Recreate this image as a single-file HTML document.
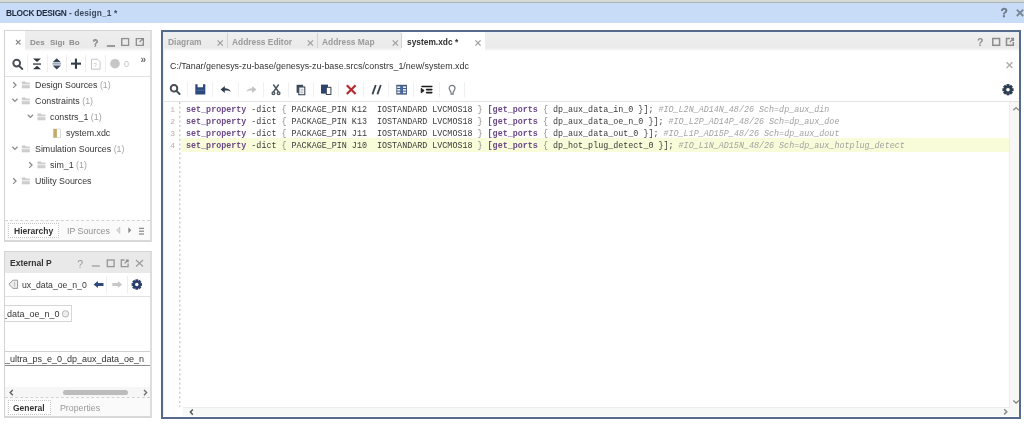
<!DOCTYPE html>
<html><head><meta charset="utf-8"><style>
*{margin:0;padding:0;box-sizing:border-box}
html,body{width:1024px;height:424px;overflow:hidden;background:#fff;font-family:"Liberation Sans",sans-serif}
body{position:relative;-webkit-font-smoothing:antialiased}
.t,.code,.ln,svg{will-change:transform}
.a{position:absolute}
.t{position:absolute;white-space:pre;line-height:12px;height:12px}
.b{font-weight:bold}
svg{position:absolute;overflow:visible}
.code{position:absolute;left:186px;font-family:"Liberation Mono",monospace;font-size:8.4px;line-height:12.1px;white-space:pre;color:#3a3a3a}
.kw{color:#6c4a88;font-weight:bold}
.cm{color:#a2a2a2;font-style:italic}
.br{color:#8a8a8a}
.ln{position:absolute;left:169px;width:6px;font-family:"Liberation Mono",monospace;font-size:8px;color:#b0b0b0;line-height:12.1px;text-align:right}
</style></head><body>

<!-- top strip + title bar -->
<div class="a" style="left:0;top:0;width:1024px;height:3px;background:#d7dbd8"></div>
<div class="a" style="left:0;top:2px;width:1024px;height:1px;background:#aab4b6"></div>
<div class="a" style="left:0;top:3px;width:1024px;height:20px;background:#c8dbf7"></div>
<div class="t b" style="left:6px;top:7px;font-size:8.4px;color:#1e2b3b;letter-spacing:-0.3px">BLOCK DESIGN<span style="color:#3b4b5e;letter-spacing:0.1px"> - design_1 *</span></div>
<svg class="a" style="left:0;top:0" width="1024" height="30"><text x="1000.6" y="17.2" font-family="Liberation Sans" font-weight="bold" font-size="12" fill="#6a7888" stroke="#6a7888" stroke-width="0.3">?</text><g stroke="#7a8794" stroke-width="1.8"><line x1="1016.8" y1="9.6" x2="1023.2" y2="16"/><line x1="1023.2" y1="9.6" x2="1016.8" y2="16"/></g></svg>

<!-- ============ LEFT TOP PANEL ============ -->
<div class="a" style="left:4px;top:30px;width:148px;height:212px;border:1px solid #d4d4d4;border-bottom:2px solid #d8d8d8;border-right:2px solid #dcdddc;background:#fff"></div>
<div class="a" style="left:5px;top:31px;width:145px;height:20px;background:linear-gradient(#eeeeee 0,#eaeaea 17px,#f4f4f4 18px,#fafafa 20px)"></div>
<div class="a" style="left:5px;top:31px;width:20px;height:20px;background:#fff"></div>
<div class="t b" style="left:30px;top:37px;font-size:8px;color:#8e8e8e">Des</div>
<div class="t b" style="left:50px;top:37px;font-size:8px;color:#8e8e8e">Sigı</div>
<div class="t b" style="left:69px;top:37px;font-size:8px;color:#8e8e8e">Bo</div>
<div class="t b" style="left:93px;top:37px;font-size:9px;color:#8a8a8a">?</div>
<div class="a" style="left:107px;top:45px;width:8px;height:2px;background:#9a9a9a"></div>
<div class="a" style="left:121px;top:38px;width:8px;height:8px;border:1.5px solid #8a8a8a"></div>
<div class="a" style="left:136px;top:38px;width:8px;height:8px;border:1.5px solid #8a8a8a"></div>

<!-- toolbar left -->
<div class="a" style="left:5px;top:76px;width:145px;height:1px;background:#e2e2e2"></div>

<!-- tree -->
<div class="t" style="left:35px;top:79px;font-size:8.85px;color:#363636">Design Sources <span style="color:#a4a4a4">(1)</span></div>
<div class="t" style="left:35px;top:95px;font-size:8.85px;color:#363636">Constraints <span style="color:#a4a4a4">(1)</span></div>
<div class="t" style="left:50px;top:111px;font-size:8.85px;color:#363636">constrs_1 <span style="color:#a4a4a4">(1)</span></div>
<div class="t" style="left:66px;top:127px;font-size:8.85px;color:#363636">system.xdc</div>
<div class="t" style="left:35px;top:143px;font-size:8.85px;color:#363636">Simulation Sources <span style="color:#a4a4a4">(1)</span></div>
<div class="t" style="left:50px;top:159px;font-size:8.85px;color:#363636">sim_1 <span style="color:#a4a4a4">(1)</span></div>
<div class="t" style="left:35px;top:175px;font-size:8.85px;color:#363636">Utility Sources</div>

<!-- bottom tabs -->
<div class="a" style="left:5px;top:220px;width:145px;height:0;border-top:1px dashed #d2d2d2"></div>
<div class="a" style="left:5px;top:221px;width:145px;height:19px;background:#fafafa"></div>
<div class="a" style="left:8px;top:223px;width:51px;height:15px;background:#fff;border:1px dotted #c4c4c4"></div>
<div class="t b" style="left:14px;top:225px;font-size:8.5px;color:#333">Hierarchy</div>
<div class="t" style="left:67px;top:225px;font-size:8.8px;color:#909090">IP Sources</div>

<!-- ============ LEFT BOTTOM PANEL ============ -->
<div class="a" style="left:4px;top:251px;width:148px;height:167px;border:1px solid #d4d4d4;border-bottom:2px solid #d8d8d8;border-right:2px solid #dcdddc;background:#fff"></div>
<div class="a" style="left:5px;top:252px;width:145px;height:21px;background:#e9e9e9"></div>
<div class="t b" style="left:10px;top:257px;font-size:8.5px;color:#333">External P</div>
<div class="a" style="left:5px;top:296px;width:145px;height:1px;background:#e2e2e2"></div>
<div class="t" style="left:22px;top:279px;font-size:8.7px;color:#363636">ux_data_oe_n_0</div>
<div class="a" style="left:5px;top:305px;width:67px;height:17px;border:1px solid #d6d6d6;border-left:none"></div>
<div class="a" style="left:5px;top:306px;width:56px;height:15px;overflow:hidden"><div class="t" style="left:-3.2px;top:2px;font-size:9px;color:#363636">_data_oe_n_0</div></div>
<div class="a" style="left:5px;top:351px;width:145px;height:1px;background:#d0d0d0"></div>
<div class="t" style="left:5px;top:353px;font-size:9px;color:#333">_ultra_ps_e_0_dp_aux_data_oe_n</div>
<div class="a" style="left:5px;top:365px;width:145px;height:1px;background:#8a8a8a"></div>
<div class="a" style="left:5px;top:387px;width:145px;height:10px;background:#f6f6f6"></div>
<div class="a" style="left:62.5px;top:389.8px;width:65.5px;height:5px;background:#bcbcbc;border-radius:2.5px"></div>
<div class="a" style="left:5px;top:397px;width:145px;height:0;border-top:1px dashed #d2d2d2"></div>
<div class="a" style="left:5px;top:398px;width:145px;height:18px;background:#fafafa"></div>
<div class="a" style="left:8px;top:400px;width:43px;height:15px;background:#fff;border:1px dotted #c4c4c4"></div>
<div class="t b" style="left:13px;top:402px;font-size:8.5px;color:#333">General</div>
<div class="t" style="left:60px;top:402px;font-size:8.8px;color:#999">Properties</div>

<!-- ============ MAIN PANEL ============ -->
<div class="a" style="left:161px;top:30px;width:860px;height:389px;border:2px solid #566b8c;background:#fff"></div>
<div class="a" style="left:163px;top:32px;width:856px;height:19px;background:linear-gradient(#e6eef8 0,#e6eef8 1px,#efefef 1px,#eaeaea 16px,#f3f3f3 17px,#fafafa 19px)"></div>
<div class="a" style="left:401px;top:32px;width:84px;height:19px;background:#fff"></div>
<div class="a" style="left:227px;top:33px;width:1px;height:15px;background:#d2d2d2"></div>
<div class="a" style="left:317px;top:33px;width:1px;height:15px;background:#d2d2d2"></div>
<div class="a" style="left:401px;top:33px;width:1px;height:15px;background:#d2d2d2"></div>
<div class="t b" style="left:168px;top:36px;font-size:8.4px;color:#9a9a9a">Diagram</div>
<div class="t b" style="left:232px;top:36px;font-size:8.4px;color:#9a9a9a">Address Editor</div>
<div class="t b" style="left:322px;top:36px;font-size:8.4px;color:#9a9a9a">Address Map</div>
<div class="t b" style="left:407px;top:36px;font-size:8.4px;color:#2e2e2e">system.xdc *</div>

<div class="t" style="left:170px;top:60px;font-size:8.9px;color:#333">C:/Tanar/genesys-zu-base/genesys-zu-base.srcs/constrs_1/new/system.xdc</div>

<div class="a" style="left:163px;top:101px;width:856px;height:1px;background:#e4e4e4"></div>
<!-- gutter -->
<svg class="a" style="left:0;top:0" width="1024" height="424"><line x1="179.8" y1="102" x2="179.8" y2="407" stroke="#b4b4b4" stroke-width="1" stroke-dasharray="2 2.6"/><line x1="163.5" y1="33" x2="163.5" y2="416" stroke="#e6f0f8" stroke-width="1"/></svg>
<!-- current line -->
<div class="a" style="left:181px;top:138px;width:828px;height:14px;background:#f9fcd8"></div>
<div class="ln" style="top:104.3px">1<br>2<br>3<br>4</div>
<div class="code" style="top:104.3px"><span class="kw">set_property</span> -dict <span class="br">{</span> PACKAGE_PIN K12  IOSTANDARD LVCMOS18 <span class="br">}</span> <span class="kw">[get_ports</span> <span class="br">{</span> dp_aux_data_in_0 }]; <span class="cm">#IO_L2N_AD14N_48/26 Sch=dp_aux_din</span>
<span class="kw">set_property</span> -dict <span class="br">{</span> PACKAGE_PIN K13  IOSTANDARD LVCMOS18 <span class="br">}</span> <span class="kw">[get_ports</span> <span class="br">{</span> dp_aux_data_oe_n_0 }]; <span class="cm">#IO_L2P_AD14P_48/26 Sch=dp_aux_doe</span>
<span class="kw">set_property</span> -dict <span class="br">{</span> PACKAGE_PIN J11  IOSTANDARD LVCMOS18 <span class="br">}</span> <span class="kw">[get_ports</span> <span class="br">{</span> dp_aux_data_out_0 }]; <span class="cm">#IO_L1P_AD15P_48/26 Sch=dp_aux_dout</span>
<span class="kw">set_property</span> -dict <span class="br">{</span> PACKAGE_PIN J10  IOSTANDARD LVCMOS18 <span class="br">}</span> <span class="kw">[get_ports</span> <span class="br">{</span> dp_hot_plug_detect_0 }]; <span class="cm">#IO_L1N_AD15N_48/26 Sch=dp_aux_hotplug_detect</span></div>

<!-- scrollbars -->
<div class="a" style="left:1009px;top:102px;width:10px;height:314px;background:#f7f7f3;border-left:1px solid #eeeeea"></div>
<div class="a" style="left:183px;top:407px;width:827px;height:9px;background:#f6f8f8;border-top:1px solid #ececec"></div>


<!-- ===== MAIN TOOLBAR ICONS ===== -->
<svg class="a" style="left:0;top:0" width="1024" height="424" viewBox="0 0 1024 424">
 <g stroke="#f0f0f0" stroke-width="1">
  <line x1="187.5" y1="82" x2="187.5" y2="97"/><line x1="212.5" y1="82" x2="212.5" y2="97"/>
  <line x1="238.5" y1="82" x2="238.5" y2="97"/><line x1="263.5" y1="82" x2="263.5" y2="97"/>
  <line x1="288.5" y1="82" x2="288.5" y2="97"/><line x1="313.5" y1="82" x2="313.5" y2="97"/>
  <line x1="338.5" y1="82" x2="338.5" y2="97"/><line x1="363.5" y1="82" x2="363.5" y2="97"/>
  <line x1="388.5" y1="82" x2="388.5" y2="97"/><line x1="413.5" y1="82" x2="413.5" y2="97"/>
  <line x1="439.5" y1="82" x2="439.5" y2="97"/><line x1="464.5" y1="82" x2="464.5" y2="97"/>
 </g>
 <!-- search -->
 <circle cx="174" cy="88.3" r="3.3" fill="none" stroke="#464c54" stroke-width="1.9"/>
 <line x1="176.6" y1="91" x2="179.6" y2="94" stroke="#464c54" stroke-width="1.9" stroke-linecap="round"/>
 <!-- save -->
 <path d="M195.3 84.3h2.3v3h5.4v-3h2.3v10.3h-10z" fill="#2c4a7e"/>
 <line x1="196.5" y1="90.2" x2="204" y2="90.2" stroke="#5d77a3" stroke-width="0.8"/>
 <!-- undo -->
 <path d="M220.6 89.6l4.2-3.6v2.2c3 0 5.2 1.2 6 3.6c-1.4-1-3.4-1.3-6-1.2v2.3z" fill="#2f3d4a"/>
 <!-- redo gray -->
 <path d="M256.4 89.6l-4.2-3.6v2.2c-3 0-5.2 1.2-6 3.6c1.4-1 3.4-1.3 6-1.2v2.3z" fill="#c4c4c4"/>
 <!-- scissors -->
 <g stroke="#4a5560" stroke-width="1.4" fill="none">
  <line x1="273.3" y1="84.5" x2="278.6" y2="92"/><line x1="278.7" y1="84.5" x2="273.4" y2="92"/>
  <circle cx="273.4" cy="93.2" r="1.3"/><circle cx="278.6" cy="93.2" r="1.3"/>
 </g>
 <!-- copy -->
 <rect x="296.6" y="84.8" width="6.5" height="8" fill="#3a4856"/>
 <rect x="298.8" y="87" width="6" height="7.7" fill="#fff" stroke="#3a4856" stroke-width="1.1"/>
 <g stroke="#8a96a2" stroke-width="0.7"><line x1="300.3" y1="89.3" x2="303.5" y2="89.3"/><line x1="300.3" y1="91" x2="303.5" y2="91"/><line x1="300.3" y1="92.7" x2="303.5" y2="92.7"/></g>
 <!-- paste -->
 <rect x="321" y="84.6" width="7" height="9" fill="#2c4570"/>
 <rect x="326.3" y="87.3" width="4.6" height="7.2" fill="#fff" stroke="#3a4450" stroke-width="1"/>
 <!-- red X -->
 <g stroke="#b52a30" stroke-width="2.2"><line x1="346.8" y1="85.2" x2="355.6" y2="94"/><line x1="355.6" y1="85.2" x2="346.8" y2="94"/></g>
 <!-- // -->
 <g stroke="#38424e" stroke-width="1.8"><line x1="375.8" y1="85" x2="372.4" y2="94.4"/><line x1="380.8" y1="85" x2="377.4" y2="94.4"/></g>
 <!-- table -->
 <rect x="396.3" y="84.8" width="10.7" height="9.8" fill="#44587c"/>
 <g fill="#e8eef8"><rect x="397.2" y="86.4" width="3.2" height="1.6"/><rect x="397.2" y="89" width="3.2" height="1.6"/><rect x="397.2" y="91.6" width="3.2" height="1.6"/>
 <rect x="402.9" y="86.4" width="3.2" height="1.6"/><rect x="402.9" y="89" width="3.2" height="1.6"/><rect x="402.9" y="91.6" width="3.2" height="1.6"/></g>
 <rect x="400.5" y="86" width="2.3" height="7.8" fill="#4068aa"/>
 <!-- indent -->
 <g stroke="#1c1c1c" stroke-width="1.6" stroke-linecap="round"><line x1="422" y1="86.5" x2="431.8" y2="86.5"/><line x1="426.6" y1="89.6" x2="431.8" y2="89.6"/><line x1="426.6" y1="92.6" x2="431.8" y2="92.6"/></g>
 <path d="M421.2 88.3l3 2.3l-3 2.3z" fill="#1c1c1c" stroke="#1c1c1c" stroke-width="0.8" stroke-linejoin="round"/>
 <!-- bulb -->
 <path d="M449.2 88.2a2.9 2.9 0 1 1 5.8 0c0 1.6-1.3 2.8-1.9 4.4v1.6h-2v-1.6c-0.6-1.6-1.9-2.8-1.9-4.4z" fill="none" stroke="#737c84" stroke-width="1.2"/>
 <!-- gear main -->
 <g transform="translate(1008 89.7)" fill="#2d3e52">
  <circle r="4.1"/>
  <g><rect x="-1.5" y="-5.6" width="3" height="11.2"/><rect x="-5.6" y="-1.5" width="11.2" height="3"/>
  <rect x="-1.5" y="-5.6" width="3" height="11.2" transform="rotate(45)"/><rect x="-5.6" y="-1.5" width="11.2" height="3" transform="rotate(45)"/></g>
  <circle r="1.8" fill="#fff"/>
 </g>
 <!-- main close x path row -->
 <g stroke="#ababab" stroke-width="1.3"><line x1="1006.6" y1="62.2" x2="1012.4" y2="68"/><line x1="1012.4" y1="62.2" x2="1006.6" y2="68"/></g>
 <!-- main header icons -->
 <text x="977" y="46.2" font-family="Liberation Sans" font-weight="bold" font-size="10.5" fill="#8e8e8e">?</text>
 <rect x="992.8" y="38.5" width="6.8" height="6.8" fill="none" stroke="#8c8c8c" stroke-width="1.5"/>
 <path d="M1010 38.5h-3.5v6.8h6.8v-3.4" fill="none" stroke="#8c8c8c" stroke-width="1.5"/>
 <path d="M1009.8 42.2l3.6-3.6M1011 38.5h2.4v2.4" fill="none" stroke="#8c8c8c" stroke-width="1.3"/>
 <!-- tab close x's -->
 <g stroke="#a0a0a0" stroke-width="1.3">
  <line x1="217.6" y1="40.4" x2="222.8" y2="45.6"/><line x1="222.8" y1="40.4" x2="217.6" y2="45.6"/>
  <line x1="307.8" y1="40.4" x2="313" y2="45.6"/><line x1="313" y1="40.4" x2="307.8" y2="45.6"/>
  <line x1="392.8" y1="40.4" x2="398" y2="45.6"/><line x1="398" y1="40.4" x2="392.8" y2="45.6"/>
  <line x1="475.4" y1="40.4" x2="480.6" y2="45.6"/><line x1="480.6" y1="40.4" x2="475.4" y2="45.6"/>
 </g>
 <!-- scroll arrows -->
 <path d="M1013.3 110.2l2.8-2.6l2.8 2.6" fill="none" stroke="#8a8a8a" stroke-width="1.4"/>
 <path d="M1013.3 400.5l2.8 2.6l2.8-2.6" fill="none" stroke="#8a8a8a" stroke-width="1.4"/>
 <path d="M192.8 409.5l-2.4 2.6l2.4 2.6" fill="none" stroke="#555" stroke-width="1.5"/>
 <path d="M1004.2 409.2l2.6 2.6l-2.6 2.6" fill="none" stroke="#8a8a8a" stroke-width="1.5"/>
</svg>

<!-- ===== LEFT PANEL ICONS ===== -->
<svg class="a" style="left:0;top:0" width="1024" height="424" viewBox="0 0 1024 424">
 <!-- top header icons -->
 <text x="92.3" y="46.5" font-family="Liberation Sans" font-size="10.5" fill="#8e8e8e">?</text>
 <line x1="106.8" y1="46" x2="114.8" y2="46" stroke="#999" stroke-width="1.3"/>
 <rect x="121.8" y="38.6" width="6.8" height="6.8" fill="none" stroke="#919191" stroke-width="1.3"/>
 <path d="M139.5 38.6h-3.2v6.8h6.8v-3.2" fill="none" stroke="#919191" stroke-width="1.3"/>
 <path d="M139.6 42l3.4-3.4M140.8 38.6h2.3v2.3" fill="none" stroke="#8c8c8c" stroke-width="1.2"/>
 <line x1="16" y1="40" x2="20.5" y2="44.5" stroke="#8c8c8c" stroke-width="1.1"/><line x1="20.5" y1="40" x2="16" y2="44.5" stroke="#8c8c8c" stroke-width="1.1"/>
 <!-- toolbar seps -->
 <g stroke="#eeeeee" stroke-width="1">
  <line x1="27.5" y1="55" x2="27.5" y2="72"/><line x1="47.5" y1="55" x2="47.5" y2="72"/>
  <line x1="66.5" y1="55" x2="66.5" y2="72"/><line x1="85.5" y1="55" x2="85.5" y2="72"/>
  <line x1="105.5" y1="55" x2="105.5" y2="72"/>
 </g>
 <!-- search -->
 <circle cx="16.7" cy="63.1" r="3.4" fill="none" stroke="#4a5058" stroke-width="1.9"/>
 <line x1="19.3" y1="66" x2="22.3" y2="69" stroke="#4a5058" stroke-width="1.9" stroke-linecap="round"/>
 <!-- collapse -->
 <path d="M33 58.5h8l-4 3.4z M33 69.2h8l-4-3.4z" fill="#303840"/>
 <rect x="33" y="63.4" width="8" height="1.3" fill="#303840"/>
 <!-- expand -->
 <path d="M52.6 62.2h8.3l-4.15-4z M52.6 65.4h8.3l-4.15 4z" fill="#38475c"/>
 <rect x="52.6" y="63.2" width="8.3" height="1.3" fill="#8090a8"/>
 <!-- plus -->
 <rect x="71" y="62.6" width="10" height="2.1" fill="#2f3e4e"/>
 <rect x="74.9" y="58.6" width="2.1" height="10.2" fill="#2f3e4e"/>
 <!-- doc ? -->
 <path d="M91.5 59.2h6l2.6 2.6v7.4h-8.6z" fill="none" stroke="#c4c4c4" stroke-width="1"/>
 <text x="93.6" y="66.6" font-family="Liberation Sans" font-size="6" fill="#c0c0c0">?</text>
 <!-- gray circle -->
 <circle cx="115" cy="63.7" r="4.8" fill="#c6c6c6"/>
 <text x="124" y="67.3" font-family="Liberation Sans" font-size="9" fill="#c4c4c4">0</text>
 <text x="140.6" y="62.5" font-family="Liberation Sans" font-weight="bold" font-size="10" fill="#6a6a6a">»</text>
 <!-- tree chevrons -->
 <g fill="none" stroke="#8a8a8a" stroke-width="1.3">
  <path d="M13.2 82.3l2.8 2.8l-2.8 2.8"/>
  <path d="M12.3 98.8l2.6 2.6l2.6-2.6"/>
  <path d="M27.8 114.8l2.6 2.6l2.6-2.6"/>
  <path d="M12.3 146.8l2.6 2.6l2.6-2.6"/>
  <path d="M29.2 162.3l2.8 2.8l-2.8 2.8"/>
  <path d="M13.2 178.3l2.8 2.8l-2.8 2.8"/>
 </g>
 <!-- folders -->
 <defs><linearGradient id="fg" x1="0" y1="0" x2="0" y2="1"><stop offset="0" stop-color="#c4c4c4"/><stop offset="0.3" stop-color="#d0d0d0"/><stop offset="0.45" stop-color="#ececec"/><stop offset="0.6" stop-color="#d4d4d4"/><stop offset="1" stop-color="#c8c8c8"/></linearGradient></defs>
 <path d="M21.8 81.6h3.2l0.8 1h4v5.6h-8z" fill="url(#fg)"/>
 <path d="M21.8 97.6h3.2l0.8 1h4v5.6h-8z" fill="url(#fg)"/>
 <path d="M37.4 113.6h3.2l0.8 1h4v5.6h-8z" fill="url(#fg)"/>
 <path d="M21.8 145.6h3.2l0.8 1h4v5.6h-8z" fill="url(#fg)"/>
 <path d="M37.4 161.6h3.2l0.8 1h4v5.6h-8z" fill="url(#fg)"/>
 <path d="M21.8 177.6h3.2l0.8 1h4v5.6h-8z" fill="url(#fg)"/>
 <!-- xdc file icon -->
 <rect x="53.5" y="129" width="7" height="8.6" fill="#fff" stroke="#d8d8d8" stroke-width="0.8"/>
 <rect x="53.5" y="129" width="3.4" height="8.6" fill="#c2aa6a"/>
 <!-- bottom tabs arrows -->
 <path d="M119.8 227.3l-3.2 3l3.2 3z" fill="#e0e0e0" stroke="#b0b0b0" stroke-width="0.6"/>
 <path d="M128.3 227.3l3 3l-3 3z" fill="#8a8a8a"/>
 <g stroke="#8e8e8e" stroke-width="1.3"><line x1="139" y1="228.4" x2="144" y2="228.4"/><line x1="139" y1="231.2" x2="144" y2="231.2"/><line x1="139" y1="234" x2="144" y2="234"/></g>

 <!-- ext panel header icons -->
 <text x="77.3" y="267.5" font-family="Liberation Sans" font-size="10.5" fill="#999">?</text>
 <line x1="91.8" y1="266" x2="99.8" y2="266" stroke="#a0a0a0" stroke-width="1.3"/>
 <rect x="107.3" y="260" width="6.8" height="6.6" fill="none" stroke="#969696" stroke-width="1.3"/>
 <path d="M124.5 260h-3.2v6.6h6.8v-3.2" fill="none" stroke="#969696" stroke-width="1.3"/>
 <path d="M124.6 263.4l3.4-3.4M125.8 260h2.3v2.3" fill="none" stroke="#8c8c8c" stroke-width="1.2"/>
 <g stroke="#9a9a9a" stroke-width="1.1"><line x1="136" y1="260" x2="143" y2="266.5"/><line x1="143" y1="260" x2="136" y2="266.5"/></g>
 <!-- port icon -->
 <path d="M13 280.2h4.6v8.2h-4.6l-4.2-4.1z" fill="#ececec" stroke="#9a9a9a" stroke-width="1"/>
 <line x1="14.6" y1="282" x2="14.6" y2="286.8" stroke="#b0b0b0" stroke-width="0.8"/>
 <!-- toolbar seps -->
 <g stroke="#eeeeee"><line x1="106.5" y1="276" x2="106.5" y2="293"/><line x1="127.5" y1="276" x2="127.5" y2="293"/></g>
 <!-- blue arrow left -->
 <path d="M93.6 284.5l4.3-3.6v2h5.6v3.2h-5.6v2z" fill="#2c4a80"/>
 <!-- gray arrow right -->
 <path d="M122.2 284.5l-4.3-3.6v2h-5.6v3.2h5.6v2z" fill="#c8c8c8"/>
 <!-- gear small -->
 <g transform="translate(136.8 284.5)" fill="#2c3f6c">
  <circle r="3.9"/>
  <rect x="-1.4" y="-5.2" width="2.8" height="10.4"/><rect x="-5.2" y="-1.4" width="10.4" height="2.8"/>
  <rect x="-1.4" y="-5.2" width="2.8" height="10.4" transform="rotate(45)"/><rect x="-5.2" y="-1.4" width="10.4" height="2.8" transform="rotate(45)"/>
  <circle r="1.7" fill="#fff"/>
 </g>
 <!-- clear icon in field -->
 <circle cx="65.5" cy="313.8" r="3.1" fill="#eeeeee" stroke="#bdbdbd" stroke-width="1.1"/>
 <!-- h scroll arrows -->
 <path d="M12.8 390l-2.6 2.6l2.6 2.6" fill="none" stroke="#606060" stroke-width="1.4"/>
 <path d="M144 390l2.6 2.6l-2.6 2.6" fill="none" stroke="#707070" stroke-width="1.4"/>
</svg>
</body></html>
